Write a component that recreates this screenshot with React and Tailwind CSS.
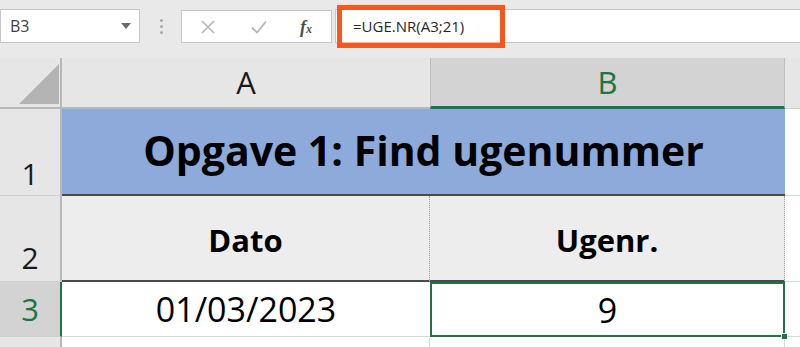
import React from "react";

const font = { fontFamily: '"Open Sans", "Noto Sans", sans-serif' };

export default function App() {
  return (
    <div className="w-[800px] h-[347px] overflow-hidden bg-white text-black" style={font}>
      {/* Formula bar */}
      <div className="relative h-[58px] bg-[#e9e9e9] flex items-start">
        <div className="mt-[9px] w-[140px] h-[34px] bg-white border border-[#c8c8c8] flex items-center justify-between pl-[9px] pr-[8px]">
          <span className="text-[16px] text-[#404040]">B3</span>
          <svg width="10" height="6" viewBox="0 0 10 6"><path d="M0 0h10L5 6z" fill="#6b6b6b" /></svg>
        </div>
        <div className="ml-[20px] mt-[19px] flex flex-col gap-[3px]">
          <div className="w-[3px] h-[3px] rounded-full bg-[#a8a8a8]" />
          <div className="w-[3px] h-[3px] rounded-full bg-[#a8a8a8]" />
          <div className="w-[3px] h-[3px] rounded-full bg-[#a8a8a8]" />
        </div>
        <div className="ml-[18px] mt-[10px] w-[151px] h-[33px] bg-white border border-[#c8c8c8] flex items-center">
          <svg className="ml-[19px]" width="14" height="14" viewBox="0 0 14 14"><path d="M1 1L13 13M13 1L1 13" stroke="#b5b5b5" strokeWidth="1.6" /></svg>
          <svg className="ml-[36px]" width="16" height="14" viewBox="0 0 16 14"><path d="M1 7.5L6 12.5L15 1.5" stroke="#b5b5b5" strokeWidth="1.8" fill="none" /></svg>
          <span className="ml-[33px] text-[18px] italic font-bold text-[#505050] leading-none" style={{ fontFamily: '"Liberation Serif", serif' }}>
            f<span className="text-[12px]">x</span>
          </span>
        </div>
        <div className="ml-[3px] mt-[9px] flex-1 h-[34px] bg-white border-y border-l border-[#c8c8c8] flex items-center pl-[17px]">
          <span className="text-[15px] text-[#262626]">=UGE.NR(A3;21)</span>
        </div>
        <div className="absolute left-[337px] top-[5px] w-[168px] h-[43px] border-[5px] border-[#f5581e]" />
      </div>

      {/* Sheet */}
      <div className="grid grid-cols-[62px_368px_355px_1fr] grid-rows-[51px_87px_86px_55px_1fr] h-[289px]">
        {/* Header row */}
        <div className="relative bg-[#e6e6e6] border-r-2 border-b-2 border-[#b8b8b8]">
          <svg className="absolute left-[19px] top-[6px]" width="40" height="40" viewBox="0 0 40 40"><path d="M40 0V40H0z" fill="#b4b4b4" /></svg>
        </div>
        <div className="bg-[#e6e6e6] border-b-2 border-[#b8b8b8] flex items-center justify-center">
          <span className="text-[31px] leading-none text-[#1a1a1a]">A</span>
        </div>
        <div className="bg-[#d3d3d3] border-x border-b-[3px] border-x-[#bdbdbd] border-b-[#217346] flex items-center justify-center">
          <span className="text-[31px] leading-none text-[#217346]">B</span>
        </div>
        <div className="bg-[#e6e6e6] border-b border-[#d0d0d0]" />

        {/* Row 1 */}
        <div className="bg-[#e6e6e6] border-r-2 border-b border-r-[#b8b8b8] border-b-[#cfcfcf] flex items-end justify-center pb-[6px]">
          <span className="text-[30px] leading-none text-[#1a1a1a]">1</span>
        </div>
        <div className="col-span-2 bg-[#8eaadb] border-b-2 border-[#4a4a4a] flex items-center justify-center pb-[2px]">
          <span className="text-[41px] font-bold leading-none">Opgave 1: Find ugenummer</span>
        </div>
        <div className="bg-white border-b border-[#d9d9d9]" />

        {/* Row 2 */}
        <div className="bg-[#e6e6e6] border-r-2 border-b border-r-[#b8b8b8] border-b-[#cfcfcf] flex items-end justify-center pb-[8px]">
          <span className="text-[30px] leading-none text-[#1a1a1a]">2</span>
        </div>
        <div className="bg-[#ededed] border-b-2 border-r border-b-[#4a4a4a] border-r-[#9a9a9a] border-dotted flex items-end justify-center pb-[24px]" style={{ borderBottomStyle: "solid" }}>
          <span className="text-[31px] font-bold leading-none">Dato</span>
        </div>
        <div className="bg-[#ededed] border-b-2 border-r border-b-[#4a4a4a] border-r-[#9a9a9a] border-dotted flex items-end justify-center pb-[24px]" style={{ borderBottomStyle: "solid" }}>
          <span className="text-[31px] font-bold leading-none">Ugenr.</span>
        </div>
        <div className="bg-white border-b border-[#d9d9d9]" />

        {/* Row 3 */}
        <div className="bg-[#d3d3d3] border-r-2 border-b border-r-[#217346] border-b-[#cfcfcf] flex items-center justify-center">
          <span className="text-[31px] leading-none text-[#217346]">3</span>
        </div>
        <div className="bg-white border-b border-[#d9d9d9] flex items-center justify-center">
          <span className="text-[34px] leading-none">01/03/2023</span>
        </div>
        <div className="relative bg-white border-2 border-[#217346] flex items-center justify-center">
          <span className="text-[34px] leading-none">9</span>
          <div className="absolute -right-[5px] -bottom-[5px] w-[7px] h-[7px] bg-[#217346] border border-white" />
        </div>
        <div className="bg-white border-b border-[#d9d9d9]" />

        {/* Row 4 */}
        <div className="bg-[#e6e6e6] border-r-2 border-[#b8b8b8]" />
        <div className="bg-white border-r border-[#d9d9d9]" />
        <div className="bg-white border-r border-[#d9d9d9]" />
        <div className="bg-white" />
      </div>
    </div>
  );
}
